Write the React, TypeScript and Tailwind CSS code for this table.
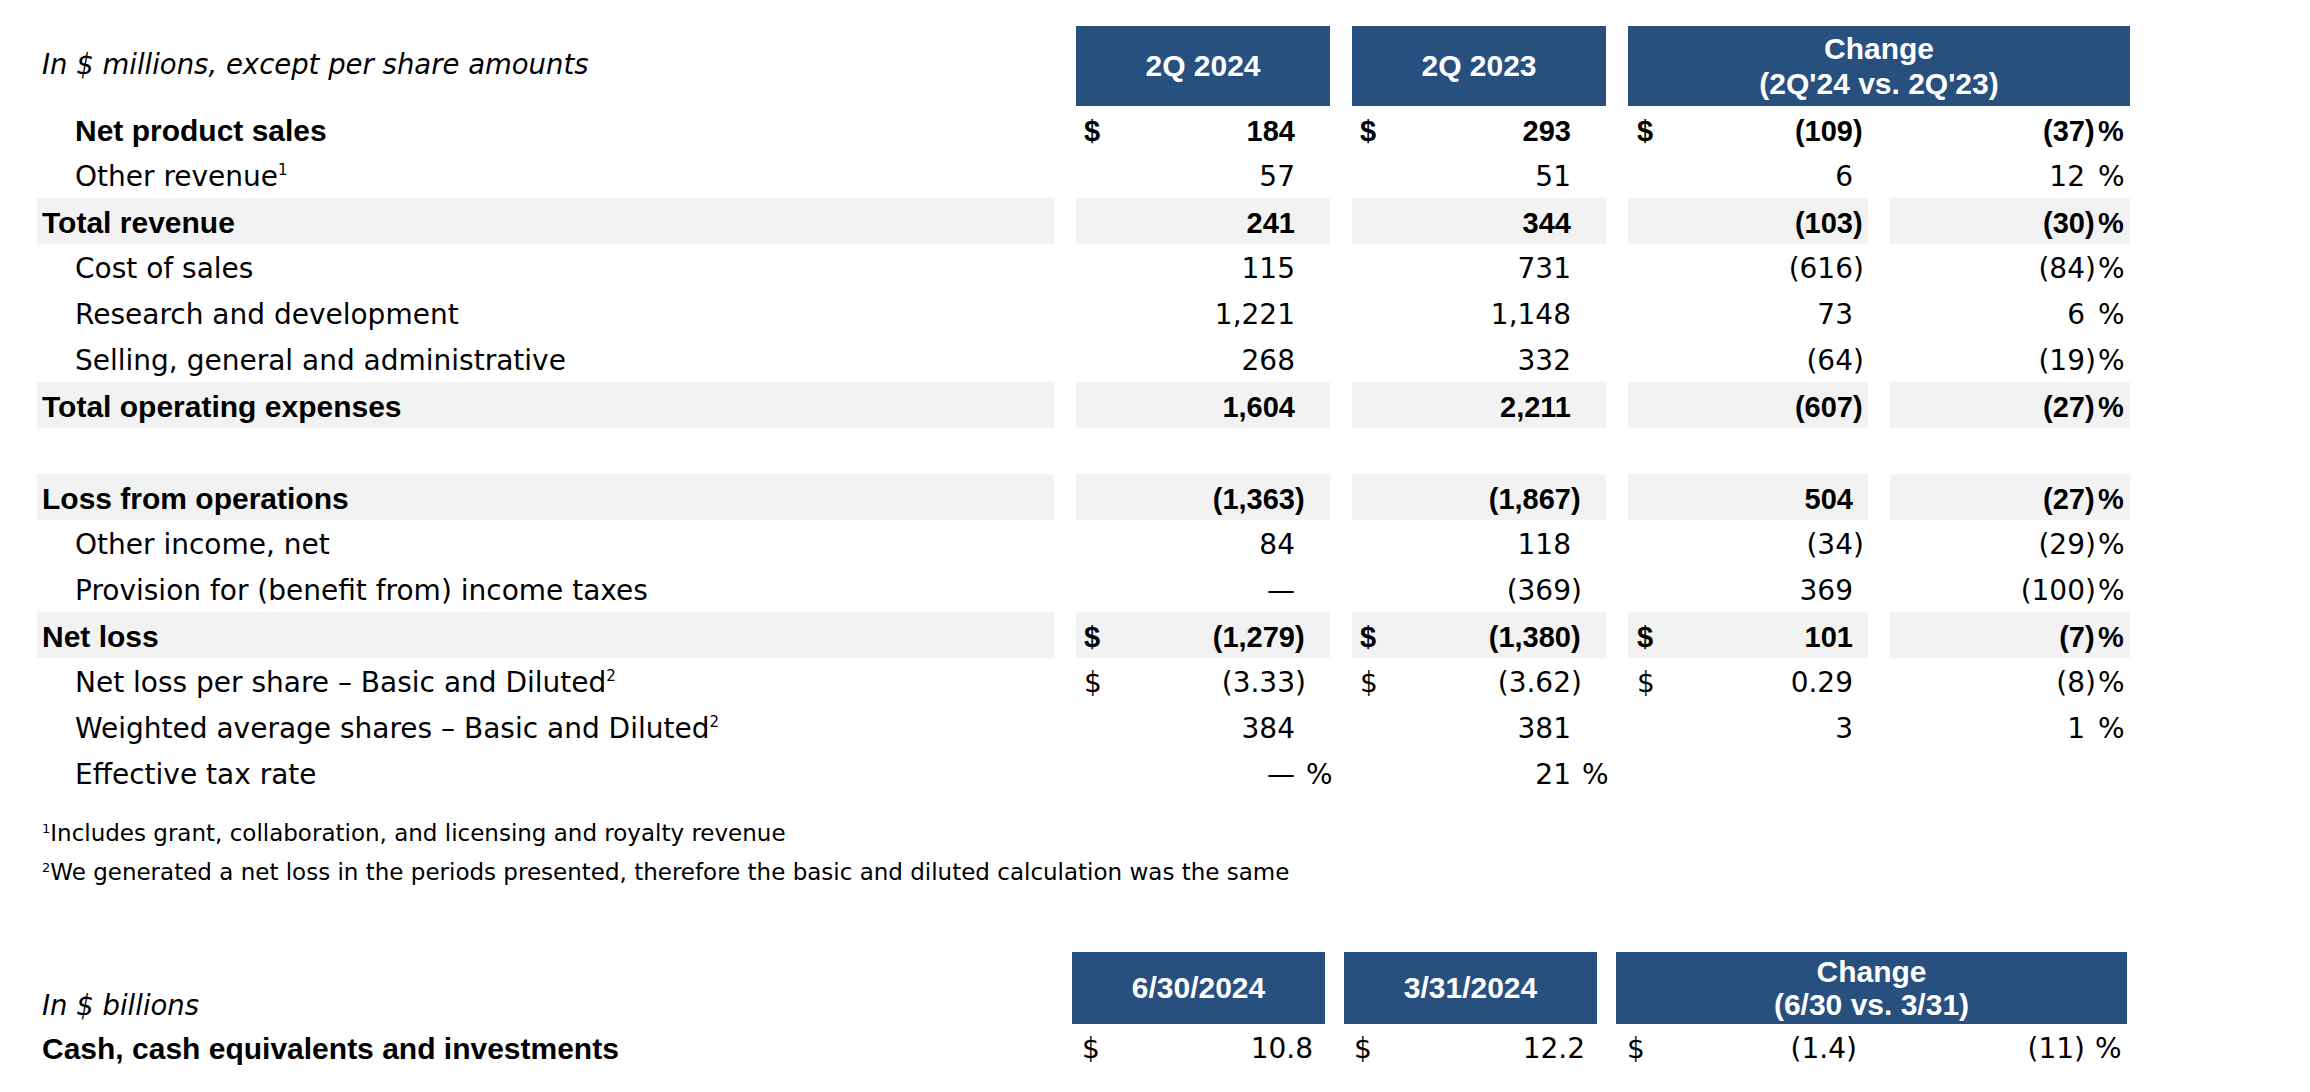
import React from 'react';

const REG = "font-['DejaVu_Sans',sans-serif] text-[28px] font-normal";
const BOLD = "font-['Liberation_Sans',Arial,sans-serif] text-[29px] font-bold";
const BOLD_LABEL = "font-['Liberation_Sans',Arial,sans-serif] text-[30px] font-bold";
const GREY = 'bg-[#f2f2f2]';
const HEAD = "bg-[#27507f] text-white font-['Liberation_Sans',Arial,sans-serif] text-[30px] font-bold";

type Level = 'sub' | 'subBold' | 'total';

type Row = {
  label: string;
  sup?: string;
  level: Level;
  dollar?: boolean;
  cells?: [string, string, string, string];
  taxRate?: boolean;
};

const rows: (Row | null)[] = [
  { label: 'Net product sales', level: 'subBold', dollar: true, cells: ['184', '293', '(109)', '(37)'] },
  { label: 'Other revenue', sup: '1', level: 'sub', cells: ['57', '51', '6', '12'] },
  { label: 'Total revenue', level: 'total', cells: ['241', '344', '(103)', '(30)'] },
  { label: 'Cost of sales', level: 'sub', cells: ['115', '731', '(616)', '(84)'] },
  { label: 'Research and development', level: 'sub', cells: ['1,221', '1,148', '73', '6'] },
  { label: 'Selling, general and administrative', level: 'sub', cells: ['268', '332', '(64)', '(19)'] },
  { label: 'Total operating expenses', level: 'total', cells: ['1,604', '2,211', '(607)', '(27)'] },
  null,
  { label: 'Loss from operations', level: 'total', cells: ['(1,363)', '(1,867)', '504', '(27)'] },
  { label: 'Other income, net', level: 'sub', cells: ['84', '118', '(34)', '(29)'] },
  { label: 'Provision for (benefit from) income taxes', level: 'sub', cells: ['—', '(369)', '369', '(100)'] },
  { label: 'Net loss', level: 'total', dollar: true, cells: ['(1,279)', '(1,380)', '101', '(7)'] },
  { label: 'Net loss per share – Basic and Diluted', sup: '2', level: 'sub', dollar: true, cells: ['(3.33)', '(3.62)', '0.29', '(8)'] },
  { label: 'Weighted average shares – Basic and Diluted', sup: '2', level: 'sub', cells: ['384', '381', '3', '1'] },
  { label: 'Effective tax rate', level: 'sub', taxRate: true, cells: ['—', '21', '', ''] },
];

function Amount({ value }: { value: string }) {
  const hang = value.endsWith(')');
  return (
    <>
      <span className="flex-1 whitespace-nowrap text-right">{hang ? value.slice(0, -1) : value}</span>
      <span className="w-[11px] shrink-0 whitespace-nowrap text-left">{hang ? ')' : ''}</span>
    </>
  );
}

function Cell({
  value,
  col,
  bold,
  dollar,
  grey,
  pct,
}: {
  value: string;
  col: 1 | 2 | 3 | 4;
  bold: boolean;
  dollar?: boolean;
  grey?: boolean;
  pct?: boolean;
}) {
  const pad = col === 1 || col === 2 ? 'pl-2' : col === 3 ? 'pl-[9px] pr-[4px]' : 'pr-[4px]';
  return (
    <div className={`flex h-[46px] items-center pt-[4px] leading-none ${pad} ${grey ? GREY : ''} ${bold ? BOLD : REG}`}>
      {col !== 4 && <span className="w-[24px] shrink-0">{dollar ? '$' : ''}</span>}
      {value !== '' && <Amount value={value} />}
      {(col === 1 || col === 2) && (
        <span className="w-[24px] shrink-0 whitespace-nowrap text-left">{pct ? '%' : ''}</span>
      )}
      {col === 4 && <span className="w-[30px] shrink-0 pl-[2px] text-left">{value !== '' ? '%' : ''}</span>}
    </div>
  );
}

function Label({ row }: { row: Row }) {
  const grey = row.level === 'total';
  const bold = row.level !== 'sub';
  return (
    <div
      className={`flex h-[46px] items-center pt-[4px] leading-none ${row.level === 'total' ? 'pl-[5px]' : 'pl-[38px]'} ${grey ? GREY : ''}`}
    >
      <span className={`whitespace-nowrap ${bold ? BOLD_LABEL : REG}`}>
        {row.label}
        {row.sup && <sup className="-top-[11px] text-[15px]">{row.sup}</sup>}
      </span>
    </div>
  );
}

export default function App() {
  return (
    <div className="min-h-[1092px] w-[2310px] bg-white pl-[37px] pt-[26px] text-black">
      <div className="grid grid-cols-[1017px_254px_254px_240px_240px] gap-x-[22px]">
        <div className="flex h-[80px] items-center pb-[2px] pl-[5px]">
          <span className="font-['DejaVu_Sans',sans-serif] text-[27.5px] italic leading-none">
            In $ millions, except per share amounts
          </span>
        </div>
        <div className={`flex h-[80px] items-center justify-center leading-none ${HEAD}`}>2Q 2024</div>
        <div className={`flex h-[80px] items-center justify-center leading-none ${HEAD}`}>2Q 2023</div>
        <div className={`col-span-2 flex h-[80px] flex-col items-center justify-center leading-[35px] ${HEAD}`}>
          <span>Change</span>
          <span>(2Q'24 vs. 2Q'23)</span>
        </div>

        {rows.map((row, i) => {
          if (!row) return <div key={i} className="col-span-5 h-[46px]" />;
          const grey = row.level === 'total';
          const bold = row.level !== 'sub';
          const c = row.cells!;
          return (
            <React.Fragment key={i}>
              <Label row={row} />
              <Cell value={c[0]} col={1} bold={bold} dollar={row.dollar} grey={grey} pct={row.taxRate} />
              <Cell value={c[1]} col={2} bold={bold} dollar={row.dollar} grey={grey} pct={row.taxRate} />
              <Cell value={c[2]} col={3} bold={bold} dollar={row.dollar} grey={grey} />
              <Cell value={c[3]} col={4} bold={bold} grey={grey} />
            </React.Fragment>
          );
        })}
      </div>

      <div className="mt-[18px] pl-[5px] font-['DejaVu_Sans',sans-serif] text-[23px] leading-[39px]">
        <p>
          <sup className="-top-[8px] text-[13px]">1</sup>Includes grant, collaboration, and licensing and royalty revenue
        </p>
        <p>
          <sup className="-top-[8px] text-[13px]">2</sup>We generated a net loss in the periods presented, therefore the
          basic and diluted calculation was the same
        </p>
      </div>

      <div className="mt-[60px] grid grid-cols-[1016px_253px_253px_511px] gap-x-[19px]">
        <div className="flex h-[72px] items-end pb-[5px] pl-[5px]">
          <span className="font-['DejaVu_Sans',sans-serif] text-[27.5px] italic leading-none">In $ billions</span>
        </div>
        <div className={`flex h-[72px] items-center justify-center leading-none ${HEAD}`}>6/30/2024</div>
        <div className={`flex h-[72px] items-center justify-center leading-none ${HEAD}`}>3/31/2024</div>
        <div className={`flex h-[72px] flex-col items-center justify-center leading-[33px] ${HEAD}`}>
          <span>Change</span>
          <span>(6/30 vs. 3/31)</span>
        </div>

        <div className="flex h-[50px] items-center pl-[5px]">
          <span className={`whitespace-nowrap leading-none ${BOLD_LABEL}`}>Cash, cash equivalents and investments</span>
        </div>
        <div className={`flex h-[50px] items-center pl-[10px] pr-[12px] leading-none ${REG}`}>
          <span>$</span>
          <span className="flex-1 text-right">10.8</span>
        </div>
        <div className={`flex h-[50px] items-center pl-[10px] pr-[12px] leading-none ${REG}`}>
          <span>$</span>
          <span className="flex-1 text-right">12.2</span>
        </div>
        <div className={`flex h-[50px] items-center leading-none ${REG}`}>
          <div className="flex w-[241px] shrink-0 pl-[11px]">
            <span>$</span>
            <span className="flex-1 text-right">(1.4)</span>
          </div>
          <div className="flex flex-1">
            <span className="flex-1 text-right">(11)</span>
            <span className="w-[42px] shrink-0 pl-[10px] text-left">%</span>
          </div>
        </div>
      </div>
    </div>
  );
}
